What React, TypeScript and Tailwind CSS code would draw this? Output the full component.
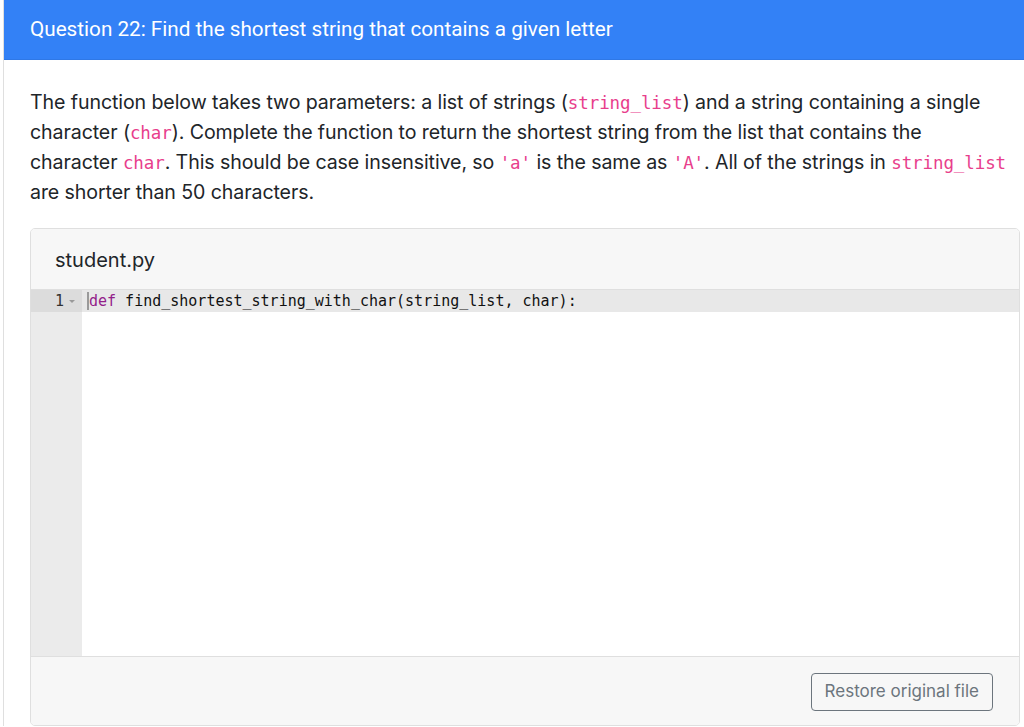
const sans = "font-['Inter','Noto_Sans',sans-serif]"

function Code({ children }: { children: React.ReactNode }) {
  return (
    <code className="font-['DejaVu_Sans_Mono','Liberation_Mono',monospace] text-[17.5px] leading-none text-[#e83e8c]">
      {children}
    </code>
  )
}

export default function App() {
  return (
    <div className="h-[727px] w-[1024px] overflow-hidden bg-white pl-[3px]">
      <div className={`w-[1021px] border-l border-[#dfdfdf] ${sans}`}>
        <div className="flex h-[60px] items-center border-b border-[#2f78e6] bg-[#3381f6] px-[26px] pt-[1px] font-['Roboto',sans-serif] text-[20.7px] text-white">
          Question 22: Find the shortest string that contains a given letter
        </div>

        <div className="pl-[26px] pr-[4px] pt-[27px]">
          <p className="mb-[21px] text-[19.6px] leading-[30px] text-[#212529] tracking-[-0.1px]">
            The function below takes two parameters: a list of strings (
            <Code>string_list</Code>) and a string containing a single
            <br />
            character (<Code>char</Code>). Complete the function to return the
            shortest string from the list that contains the
            <br />
            character <Code>char</Code>. This should be case insensitive, so{' '}
            <Code>'a'</Code> is the same as <Code>'A'</Code>. All of the strings
            in <Code>string_list</Code>
            <br />
            are shorter than 50 characters.
          </p>

          <div className="w-[990px] overflow-hidden rounded-[5px] border border-[#dfdfdf]">
            <div className="flex h-[61px] items-center border-b border-[#dfdfdf] bg-[#f7f7f7] px-[24px] pt-[1px] text-[20px] text-[#212529]">
              student.py
            </div>

            <div className="flex h-[366px] bg-white font-['DejaVu_Sans_Mono','Liberation_Mono',monospace] text-[15px]">
              <div className="w-[51px] bg-[#ebebeb]">
                <div className="flex h-[22px] items-center justify-end bg-[#dcdcdc] pr-[5px] text-[#333]">
                  <span>1</span>
                  <svg width="10" height="10" viewBox="0 0 10 10" className="ml-[3px]">
                    <path d="M2 4 L8 4 L5 7 Z" fill="#999" />
                  </svg>
                </div>
              </div>
              <div className="flex-1">
                <div className="flex h-[22px] items-center bg-[#e8e8e8] pl-[5px] text-[#111]">
                  <span className="h-[18px] w-[2px] bg-[#9a9a9a]" />
                  <span className="text-[#93208a]">def</span>
                  <span className="whitespace-pre"> find_shortest_string_with_char(string_list, char):</span>
                </div>
              </div>
            </div>

            <div className="flex justify-end border-t border-[#dfdfdf] bg-[#f7f7f7] pb-[14px] pr-[26px] pt-[16px]">
              <button className="h-[38px] rounded-[4px] border border-[#6c757d] px-[13px] text-[17px] text-[#6c757d]">
                Restore original file
              </button>
            </div>
          </div>
        </div>
      </div>
    </div>
  )
}
